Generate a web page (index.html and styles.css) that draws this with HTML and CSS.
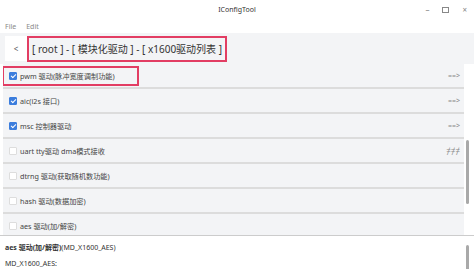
FILE: index.html
```html
<!DOCTYPE html>
<html lang="zh">
<head>
    <meta charset="UTF-8">
    <title>IConfigTool</title>
    <link rel="stylesheet" href="styles.css">
</head>
<body>
    <div class="titlebar">
        <span></span>
        <span class="title">IConfigTool</span>
        <div class="controls">
            <span class="ctl">&#8211;</span>
            <span class="ctl max"></span>
            <span class="ctl">&#215;</span>
        </div>
    </div>

    <div class="menubar">
        <span>File</span>
        <span>Edit</span>
    </div>

    <div class="toolbar">
        <button class="back">&lt;</button>
        <div class="path">[ root ] - [ 模块化驱动 ] - [ x1600驱动列表 ]</div>
    </div>

    <div class="main">
        <div class="list">
            <div class="row">
                <label class="item selected"><span class="box checked"></span>pwm 驱动(脉冲宽度调制功能)</label>
                <span class="mark">==&gt;</span>
            </div>
            <div class="row">
                <label class="item"><span class="box checked"></span>aic(i2s 接口)</label>
                <span class="mark">==&gt;</span>
            </div>
            <div class="row">
                <label class="item"><span class="box checked"></span>msc 控制器驱动</label>
                <span class="mark">==&gt;</span>
            </div>
            <div class="row">
                <label class="item"><span class="box"></span>uart tty驱动 dma模式接收</label>
                <span class="mark neq">&#8800;&#8800;&#8800;</span>
            </div>
            <div class="row">
                <label class="item"><span class="box"></span>dtrng 驱动(获取随机数功能)</label>
            </div>
            <div class="row">
                <label class="item"><span class="box"></span>hash 驱动(数据加密)</label>
            </div>
            <div class="row">
                <label class="item"><span class="box"></span>aes 驱动(加/解密)</label>
            </div>
        </div>
        <div class="scroll"><div class="thumb"></div></div>
    </div>

    <div class="info">
        <div class="text">
            <p><b>aes 驱动(加/解密)</b>(MD_X1600_AES)</p>
            <p>MD_X1600_AES:</p>
        </div>
        <div class="scroll small"><div class="thumb"></div></div>
    </div>
</body>
</html>
```

FILE: styles.css
```css
body {
    margin: 0;
    width: 474px;
    height: 269px;
    overflow: hidden;
    background-color: #fff;
    font-family: "Noto Sans", "Noto Sans CJK SC", sans-serif;
    color: #333;
}
.titlebar {
    height: 19px;
    display: grid;
    grid-template-columns: 1fr auto 1fr;
    align-items: center;
    font-size: 7px;
}
.title {
    color: #333;
}
.controls {
    display: flex;
    justify-content: flex-end;
    align-items: center;
    gap: 13px;
    padding-right: 7px;
    color: #888;
    font-size: 8px;
}
.ctl.max {
    width: 5px;
    height: 4px;
    border: 1px solid #888;
}
.menubar {
    height: 14px;
    display: flex;
    align-items: center;
    gap: 10px;
    padding-left: 5px;
    font-size: 7px;
    color: #888;
}
.toolbar {
    height: 31px;
    background-color: #f3f4f6;
    display: flex;
    align-items: center;
    padding-left: 5px;
}
.back {
    width: 22px;
    height: 25px;
    border: none;
    background-color: #fff;
    font-family: inherit;
    font-size: 8px;
    color: #555;
    padding: 0;
}
.path {
    height: 22px;
    border: 2px solid #e23d63;
    display: flex;
    align-items: center;
    padding: 0 3px;
    font-size: 10px;
    color: #333;
    white-space: nowrap;
}
.main {
    display: flex;
    height: 171px;
    background-color: #fff;
}
.list {
    flex: 1;
    margin-left: 3px;
    background-color: #f3f4f6;
    overflow: hidden;
}
.row {
    height: 23px;
    border-bottom: 2px solid #dcdcdc;
    display: flex;
    align-items: center;
    justify-content: space-between;
    padding-right: 4px;
}
.item {
    display: flex;
    align-items: center;
    gap: 3px;
    font-size: 7.2px;
    color: #444;
    height: 16px;
    padding: 0 22px 0 5px;
    margin-left: -1px;
    border: 2px solid transparent;
    white-space: nowrap;
}
.item.selected {
    border-color: #e23d63;
}
.box {
    width: 8px;
    height: 8px;
    border: 1px solid #ddd;
    background-color: #fff;
    border-radius: 1px;
    box-sizing: border-box;
}
.box.checked {
    background-color: #3b7ddd;
    border-color: #3b7ddd;
    position: relative;
}
.box.checked::after {
    content: "";
    position: absolute;
    left: 1.5px;
    top: 0;
    width: 2px;
    height: 4px;
    border: solid #fff;
    border-width: 0 1px 1px 0;
    transform: rotate(45deg);
}
.mark {
    font-size: 7px;
    color: #888;
}
.mark.neq {
    font-size: 8px;
    color: #888;
}
.scroll {
    width: 10px;
    background-color: #fff;
}
.scroll .thumb {
    margin: 76px 0 0 2px;
    width: 3px;
    height: 64px;
    background-color: #a9a9a9;
    border-radius: 2px;
}
.info {
    display: flex;
    height: 34px;
    border-top: 1px solid #ccc;
}
.text {
    flex: 1;
    padding: 4px 0 0 5px;
    font-size: 7px;
    color: #333;
}
.text p {
    margin: 0;
    line-height: 16px;
}
.scroll.small .thumb {
    margin-top: 9px;
    height: 30px;
}
```
